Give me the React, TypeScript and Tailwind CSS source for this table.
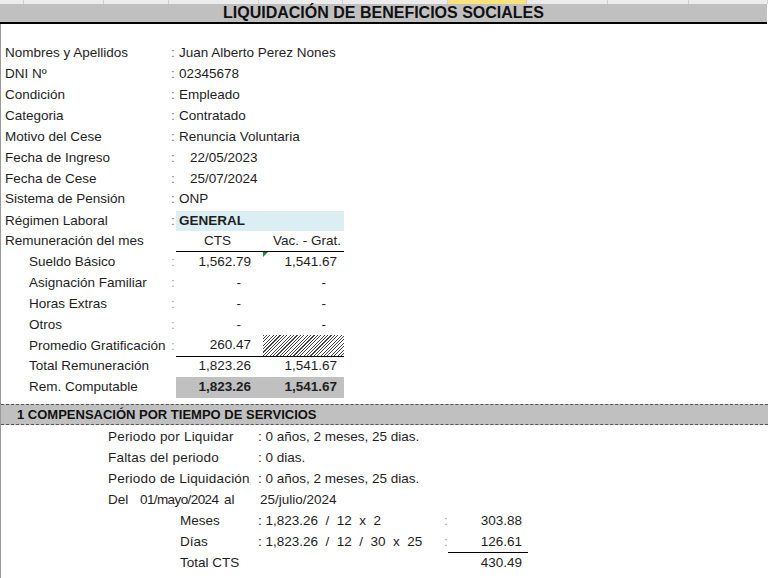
import type { ReactNode } from "react";

const stripCells = [
  { w: "w-[24px]", c: "bg-[#ececec]" },
  { w: "w-[80px]", c: "bg-[#ececec]" },
  { w: "w-[65px]", c: "bg-[#ececec]" },
  { w: "w-[90px]", c: "bg-[#ececec]" },
  { w: "w-[84px]", c: "bg-[#ececec]" },
  { w: "w-[105px]", c: "bg-[#ececec]" },
  { w: "w-[79px]", c: "bg-[#ffe27a]" },
  { w: "w-[81px]", c: "bg-[#ececec]" },
  { w: "w-[81px]", c: "bg-[#ececec]" },
  { w: "w-[79px]", c: "bg-[#ececec]" },
];

const InfoRow = ({ label, value, date }: { label: string; value: string; date?: boolean }) => (
  <div className="grid h-[20.875px] grid-cols-[170px_5px_168px] items-center">
    <div className="pl-[4px]">{label}</div>
    <div className="text-gray-500">:</div>
    <div className={date ? "pl-[14px]" : "pl-[3px]"}>{value}</div>
  </div>
);

const AmountRow = ({
  label,
  cts,
  vac,
  rowClass = "",
  ctsClass = "",
  vacClass = "",
  colon = true,
}: {
  label: string;
  cts: ReactNode;
  vac: ReactNode;
  rowClass?: string;
  ctsClass?: string;
  vacClass?: string;
  colon?: boolean;
}) => (
  <div className={`grid h-[20.875px] grid-cols-[170px_5px_87px_81px] ${rowClass}`}>
    <div className="flex items-center pl-[28px]">{label}</div>
    <div className="flex items-center text-gray-400">{colon ? ":" : ""}</div>
    <div className={`flex items-center justify-end pr-[12px] ${ctsClass}`}>{cts}</div>
    <div className={`flex items-center justify-end pr-[7px] ${vacClass}`}>{vac}</div>
  </div>
);

const CalcRow = ({ label, value }: { label: string; value: string }) => (
  <div className="grid h-[21px] grid-cols-[107px_150px_300px] items-center">
    <div />
    <div className="tracking-[0.2px]">{label}</div>
    <div className="whitespace-pre">{value}</div>
  </div>
);

const ResultRow = ({
  label,
  formula,
  result,
  underline,
}: {
  label: string;
  formula: string;
  result: string;
  underline?: boolean;
}) => (
  <div className="grid h-[21px] grid-cols-[179px_78px_186px_4px_80px]">
    <div />
    <div className="flex items-center">{label}</div>
    <div className="flex items-center whitespace-pre">{formula}</div>
    <div className="flex items-center text-gray-400">{result && formula ? ":" : ""}</div>
    <div
      className={`flex items-center justify-end pr-[6px] ${underline ? "border-b border-black" : ""}`}
    >
      {result}
    </div>
  </div>
);

export default function App() {
  return (
    <div className="h-[578px] w-[768px] overflow-hidden bg-white font-['Liberation_Sans',Arial,sans-serif] text-[13.5px] text-[#1e1e1e]">
      {/* top grid strip */}
      <div className="flex h-[4px]">
        {stripCells.map((s, i) => (
          <div key={i} className={`${s.w} ${s.c} border-r border-[#cfcfcf]`} />
        ))}
      </div>

      {/* title */}
      <div className="mr-[1px] flex h-[20px] items-center justify-center border-b-2 border-black bg-[#c0c0c0]">
        <h1 className="text-[16px] font-bold leading-none text-[#111]">LIQUIDACIÓN DE BENEFICIOS SOCIALES</h1>
      </div>

      <div className="h-[554px] border-l border-[#9a9a9a]">
        {/* datos generales */}
        <div className="pt-[19px]">
          <InfoRow label="Nombres y Apellidos" value="Juan Alberto Perez Nones" />
          <InfoRow label="DNI Nº" value="02345678" />
          <InfoRow label="Condición" value="Empleado" />
          <InfoRow label="Categoria" value="Contratado" />
          <InfoRow label="Motivo del Cese" value="Renuncia Voluntaria" />
          <InfoRow label="Fecha de Ingreso" value="22/05/2023" date />
          <InfoRow label="Fecha de Cese" value="25/07/2024" date />
          <InfoRow label="Sistema de Pensión" value="ONP" />
          <div className="grid h-[20.875px] grid-cols-[170px_5px_168px]">
            <div className="flex items-center pl-[4px]">Régimen Laboral</div>
            <div className="flex items-center text-gray-500">:</div>
            <div className="my-[1px] flex items-center bg-[#daeef3] pl-[3px] font-bold">GENERAL</div>
          </div>

          {/* remuneraciones */}
          <div className="grid h-[20.875px] grid-cols-[170px_5px_87px_81px]">
            <div className="flex items-center pl-[4px]">Remuneración del mes</div>
            <div />
            <div className="flex items-center justify-center border-b border-black pr-[4px]">CTS</div>
            <div className="flex items-center justify-end border-b border-black pr-[3px]">Vac. - Grat.</div>
          </div>
          <AmountRow
            label="Sueldo Básico"
            cts="1,562.79"
            vac={
              <>
                <span className="absolute left-0 top-0 h-0 w-0 border-r-[5px] border-t-[5px] border-r-transparent border-t-[#1e8a3a]" />
                1,541.67
              </>
            }
            vacClass="relative"
          />
          <AmountRow label="Asignación Familiar" cts="-" vac="-" ctsClass="pr-[22px]" vacClass="pr-[18px]" />
          <AmountRow label="Horas Extras" cts="-" vac="-" ctsClass="pr-[22px]" vacClass="pr-[18px]" />
          <AmountRow label="Otros" cts="-" vac="-" ctsClass="pr-[22px]" vacClass="pr-[18px]" />
          <AmountRow
            label="Promedio Gratificación"
            cts="260.47"
            vac=""
            ctsClass="border-b border-black"
            vacClass="border-b border-black bg-[repeating-linear-gradient(135deg,#444_0px,#444_0.8px,#fff_0.8px,#fff_2.4px)]"
          />
          <AmountRow label="Total Remuneración" cts="1,823.26" vac="1,541.67" colon={false} />
          <AmountRow
            label="Rem. Computable"
            cts="1,823.26"
            vac="1,541.67"
            colon={false}
            ctsClass="bg-[#c0c0c0] font-bold"
            vacClass="bg-[#c0c0c0] font-bold"
          />
        </div>

        {/* seccion 1 */}
        <div className="mt-[6px] flex h-[21px] items-center border-y border-dashed border-[#555] bg-[#c0c0c0] pl-[16px] text-[13px] font-bold text-[#111]">
          1 COMPENSACIÓN POR TIEMPO DE SERVICIOS
        </div>

        <div className="pt-[2px]">
          <CalcRow label="Periodo por Liquidar" value=": 0 años, 2 meses, 25 dias." />
          <CalcRow label="Faltas del periodo" value=": 0 dias." />
          <CalcRow label="Periodo de Liquidación" value=": 0 años, 2 meses, 25 dias." />
          <div className="grid h-[21px] grid-cols-[107px_32px_84px_36px_200px] items-center">
            <div />
            <div>Del</div>
            <div className="tracking-[-0.6px]">01/mayo/2024</div>
            <div>al</div>
            <div>25/julio/2024</div>
          </div>
          <ResultRow label="Meses" formula={": 1,823.26  /  12  x  2"} result="303.88" />
          <ResultRow label="Días" formula={": 1,823.26  /  12  /  30  x  25"} result="126.61" underline />
          <ResultRow label="Total CTS" formula="" result="430.49" />
        </div>
      </div>
    </div>
  );
}
